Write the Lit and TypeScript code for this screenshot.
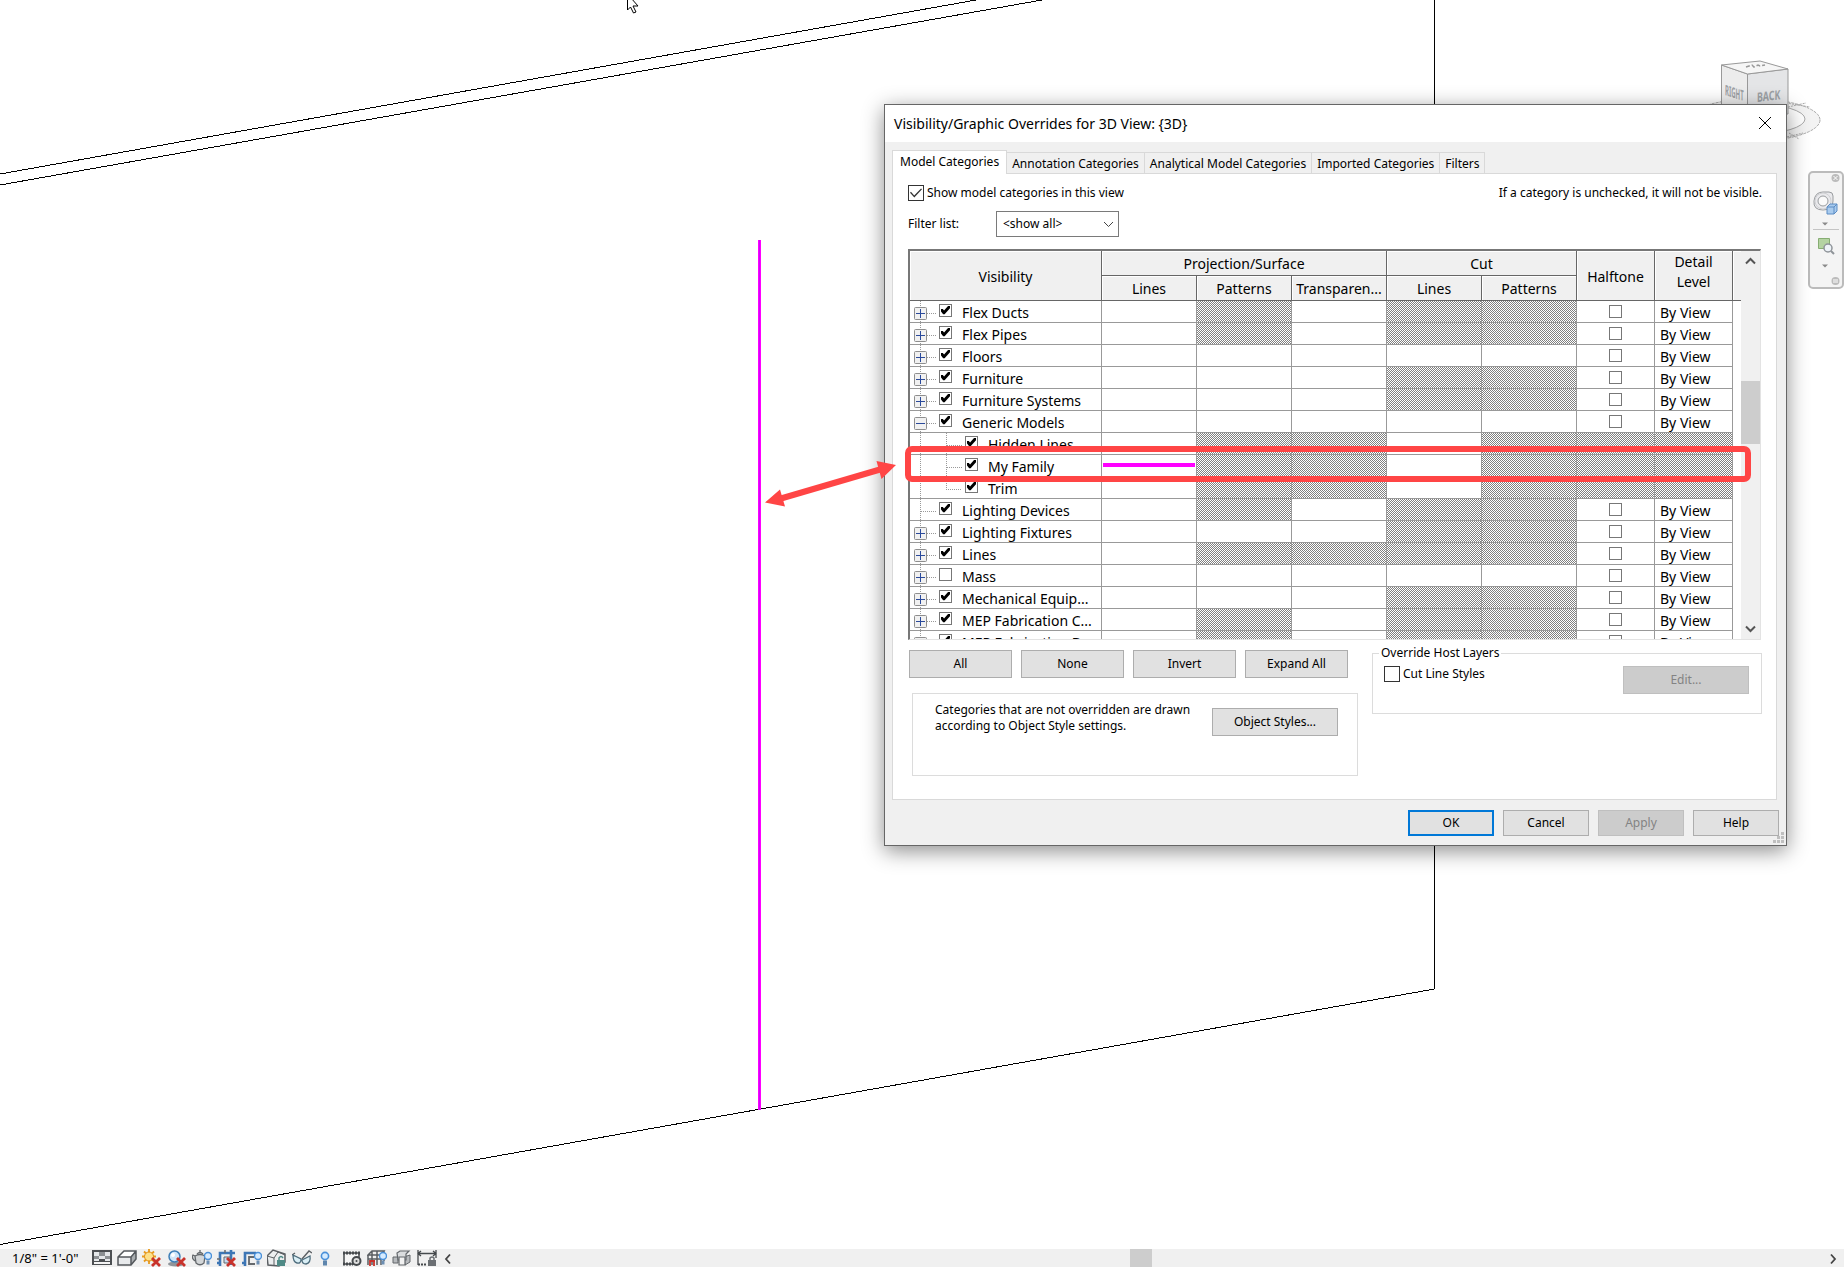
import { LitElement, css, html, svg, nothing, TemplateResult } from "lit";
import { customElement, state } from "lit/decorators.js";
import { classMap } from "lit/directives/class-map.js";

interface Category {
  name: string;
  /** Tree marker: "+" collapsed, "-" expanded, "" leaf, "child" / "last" subcategory. */
  node: "+" | "-" | "" | "child" | "last";
  on: boolean;
  /** Five flags for projection lines, patterns, transparency, cut lines, cut patterns; x = not available. */
  cells: string;
  line?: boolean;
}

const CATEGORIES: Category[] = [
  { name: "Flex Ducts", node: "+", on: true, cells: ".x.xx" },
  { name: "Flex Pipes", node: "+", on: true, cells: ".x.xx" },
  { name: "Floors", node: "+", on: true, cells: "....." },
  { name: "Furniture", node: "+", on: true, cells: "...xx" },
  { name: "Furniture Systems", node: "+", on: true, cells: "...xx" },
  { name: "Generic Models", node: "-", on: true, cells: "....." },
  { name: "Hidden Lines", node: "child", on: true, cells: ".xx.x" },
  { name: "My Family", node: "child", on: true, cells: ".xx.x", line: true },
  { name: "Trim", node: "last", on: true, cells: ".xx.x" },
  { name: "Lighting Devices", node: "", on: true, cells: ".x.xx" },
  { name: "Lighting Fixtures", node: "+", on: true, cells: "...xx" },
  { name: "Lines", node: "+", on: true, cells: ".xxxx" },
  { name: "Mass", node: "+", on: false, cells: "....." },
  { name: "Mechanical Equip...", node: "+", on: true, cells: "...xx" },
  { name: "MEP Fabrication C...", node: "+", on: true, cells: ".x.xx" },
  { name: "MEP Fabrication D...", node: "+", on: true, cells: ".x.xx" },
];

const TABS = [
  "Model Categories",
  "Annotation Categories",
  "Analytical Model Categories",
  "Imported Categories",
  "Filters",
];

const redX = svg`<path d="M10 9l8 8M18 9l-8 8" stroke="#c8322b" stroke-width="2.800" fill="none"/>`;
const smallBulb = svg`<circle cx="16" cy="7" r="3.500" fill="#d6ebff" stroke="#4a90d9" stroke-width="1.400"/><path d="M14.500 11.500h3v4h-3z" fill="#6d8fb3"/>`;

const VIEW_TOOLS: { label: string; art: TemplateResult }[] = [
  {
    label: "Detail Level",
    art: svg`<path d="M0 1h20v15H0z" fill="#4c4f52"/><path d="M2 3h5v4H2zM13 3h5v4h-5zM7 7h6v3H7zM2 10h5v2H2zM13 10h5v2h-5z" fill="#e4e7e9"/><path d="M7 3h6v4H7zM2 7h5v3H2zM13 7h5v3h-5z" fill="#8c9093"/><path d="M2 13h16v2H2z" fill="#f4f4f4"/>`,
  },
  {
    label: "Visual Style",
    art: svg`<path d="M1 8l6-6h12l-5 6z" fill="#fff"/><path d="M14 8l5-6v8l-5 6z" fill="#a9adb0"/><path d="M1 8h13v8H1z" fill="#e8eaec"/><path d="M1 8l6-6h12v8l-5 6H1zM1 8h13v8M14 8l5-6" fill="none" stroke="#54585c" stroke-width="1.500"/>`,
  },
  {
    label: "Sun Path",
    art: svg`<path d="M7 0v15M0 7.500h14M2 2.500l10 10M12 2.500l-10 10" stroke="#e79a1c" stroke-width="1.800"/><circle cx="7" cy="7.500" r="4.500" fill="#fde08a" stroke="#e08c10"/>${redX}`,
  },
  {
    label: "Shadows",
    art: svg`<ellipse cx="9" cy="15" rx="8" ry="2.500" fill="#8f9499"/><circle cx="7.500" cy="7.500" r="5.500" fill="#cfe6fa" stroke="#3f7fb8" stroke-width="1.500"/><circle cx="6" cy="6" r="2" fill="#fff"/>${redX}`,
  },
  {
    label: "Rendering Dialog",
    art: svg`<path d="M3 7q5-3 10 0l-1 7q-4 3.500-8 0zM3 12Q-1 9 1 6l2 1M5 5q3-3 6 0M8 3V1M13 8q4-3 6 0" fill="#d3d6d8" stroke="#63676b" stroke-width="1.300"/>${smallBulb}`,
  },
  {
    label: "Crop View",
    art: svg`<path d="M3 17V4h15M14 1v15M0 14h4" fill="none" stroke="#3d76b5" stroke-width="2.600"/><path d="M7 8h6v6H7z" fill="#c6dcf2" stroke="#65696d"/><path d="M0 10h3M8 1v3" stroke="#65696d" stroke-width="1.500"/>${redX}`,
  },
  {
    label: "Show Crop Region",
    art: svg`<path d="M3 17V4h11M0 14h4" fill="none" stroke="#3d76b5" stroke-width="2.600"/><path d="M7 16V8h5M7 15h6" fill="none" stroke="#65696d" stroke-width="1.800"/>${smallBulb}`,
  },
  {
    label: "Unlocked 3D View",
    art: svg`<path d="M0 7l6-6 12 4v8l-6 4-11-1z" fill="#eceeef" stroke="#5a5e62" stroke-width="1.500"/><path d="M0 7l7 2 4-6M7 9v7M11 3l7 3" fill="none" stroke="#5a5e62"/><path d="M10 11h8v6h-8z" fill="#4f8a86"/><path d="M12 11V9q2-3 4 0" fill="none" stroke="#4f8a86" stroke-width="1.500"/>`,
  },
  {
    label: "Temporary Hide/Isolate",
    art: svg`<path d="M0 6l3-2M10 10l7-8 3 2" fill="none" stroke="#5a5e62" stroke-width="1.400"/><path d="M1 6l8 4q0 5-4 4-4-1-4-8zM10 11l8-4q1 7-4 8-4 0-4-4z" fill="#d9eef5" stroke="#4d6c7c" stroke-width="1.300"/>`,
  },
  {
    label: "Reveal Hidden Elements",
    art: svg`<circle cx="8" cy="7" r="3.600" fill="#d6ebff" stroke="#4a90d9" stroke-width="1.600"/><path d="M6 11.500h4v5H6z" fill="#5f86ad"/>`,
  },
  {
    label: "Temporary View Properties",
    art: svg`<path d="M2 4h15v11H2z" fill="#f6f6f6" stroke="#45494c" stroke-width="1.500"/><path d="M1 4h17" stroke="#45494c" stroke-width="3" stroke-dasharray="2 1"/><path d="M1 15h10" stroke="#45494c" stroke-width="3" stroke-dasharray="2 1"/><circle cx="14.500" cy="12" r="4" fill="#ddd" stroke="#45494c" stroke-width="2"/><circle cx="14.500" cy="12" r="1" fill="#45494c"/>`,
  },
  {
    label: "Analytical Model",
    art: svg`<path d="M1 6l4-4h12l-3 4zM1 6v10M5 6v10M10 6v10M14 6v10M1 10h13M17 2v10M5 2v4M10 2v4" fill="none" stroke="#5a5e62" stroke-width="1.500"/><path d="M3 11v6M7 11v6M3 12h5" stroke="#c8322b" stroke-width="1.800"/>${smallBulb}`,
  },
  {
    label: "Highlight Displacement Sets",
    art: svg`<path d="M1 8h5v6H1zM12 8l6-2v7l-5 3z" fill="#b7babd" stroke="#63676b"/><path d="M5 4l3-2h9l-3 3v6H6z" fill="#dadcde" stroke="#63676b" stroke-width="1.200"/><path d="M7 8h6v8H7z" fill="#f2f2f2" stroke="#63676b" stroke-width="1.200"/>`,
  },
  {
    label: "Reveal Constraints",
    art: svg`<path d="M1 1v15M19 1v8M1 4.500h18M4 2L1 4.500 4 7M16 2l3 2.500L16 7" fill="none" stroke="#45494c" stroke-width="1.300"/><path d="M1 15.500h9" stroke="#45494c" stroke-width="2" stroke-dasharray="2 1"/><path d="M11 11h8v6h-8z" fill="#6b6f73"/><path d="M13 11V9q2-2 4 0v2" fill="none" stroke="#6b6f73" stroke-width="1.500"/>`,
  },
];

@customElement("app-root")
export class AppRoot extends LitElement {
  @state() private tab = 0;

  static styles = css`
    :host {
      display: block;
      --ui: "Noto Sans", "Open Sans", sans-serif;
      --rule: #999;
      --head-rule: #666;
      font: 12px/16px var(--ui);
      color: #000;
    }
    * {
      box-sizing: border-box;
    }
    button,
    input,
    select {
      font: inherit;
      color: inherit;
      margin: 0;
      padding: 0;
    }
    .workspace {
      position: relative;
      display: flex;
      flex-direction: column;
      min-height: 100vh;
      background: #fff;
      overflow: hidden;
    }
    .canvas {
      flex: 1;
    }
    .scene,
    .markup {
      position: absolute;
      inset: 0;
      width: 100%;
      height: 100%;
      pointer-events: none;
    }

    /* View control bar */
    .status {
      position: relative;
      display: flex;
      align-items: center;
      height: 18px;
      background: #f0f0f0;
      padding-left: 12px;
    }
    .scale {
      width: 80px;
      border: 0;
      background: none;
      text-align: left;
      font-size: 13px;
      line-height: 18px;
    }
    .tools {
      display: flex;
      gap: 5px;
    }
    .tool,
    .arrow {
      border: 0;
      background: none;
      display: block;
      height: 18px;
      width: 20px;
    }
    .tool svg,
    .arrow svg {
      display: block;
    }
    .hbar {
      flex: 1;
      display: flex;
      justify-content: space-between;
    }
    .thumb {
      width: 22px;
      background: #cdcdcd;
    }

    /* Navigation bar */
    .nav {
      position: absolute;
      top: 171px;
      right: 0;
      width: 36px;
      height: 118px;
      border: 2px solid #bbb;
      border-radius: 5px;
      background: #f4f4f4;
    }
    .nav svg {
      display: block;
    }

    /* Dialog */
    .dialog {
      position: absolute;
      left: 884px;
      top: 104px;
      width: 903px;
      border: 1px solid #666;
      background: #f0f0f0;
      box-shadow: 0 5px 20px rgba(0, 0, 0, 0.45);
    }
    .title {
      display: flex;
      align-items: center;
      justify-content: space-between;
      height: 37px;
      background: #fff;
      padding: 0 14px 0 9px;
    }
    .title h1 {
      margin: 0;
      font: 14px/20px var(--ui);
    }
    .close {
      width: 14px;
      height: 14px;
      border: 0;
      background: none;
    }
    .close svg {
      display: block;
    }
    .body {
      padding: 8px 9px 0 7px;
    }
    .tabs {
      display: flex;
      align-items: flex-end;
    }
    .tab {
      height: 21px;
      border: 1px solid #d9d9d9;
      border-left: 0;
      border-bottom: 0;
      background: #f0f0f0;
      padding: 1px 5px 0;
      white-space: nowrap;
    }
    .tab.active {
      height: 24px;
      margin-bottom: -1px;
      border-left: 1px solid #d9d9d9;
      background: #fff;
      padding: 0 7px 2px;
      position: relative;
    }
    .panel {
      border: 1px solid #d9d9d9;
      background: #fff;
      padding: 11px 14px 23px 15px;
    }
    .line {
      display: flex;
      align-items: center;
    }
    .top {
      justify-content: space-between;
    }
    .check {
      display: flex;
      align-items: center;
      gap: 3px;
    }
    .box {
      appearance: none;
      display: grid;
      place-items: center;
      width: 16px;
      height: 16px;
      border: 1px solid #333;
      background: #fff;
      flex: none;
    }
    .box:checked::before {
      content: "";
      width: 12px;
      height: 10px;
      background: #333;
      clip-path: polygon(0 48%, 8% 38%, 35% 76%, 92% 4%, 100% 12%, 36% 96%);
    }
    .filter {
      margin-top: 10px;
    }
    .filter label {
      width: 88px;
    }
    .pick {
      display: grid;
      align-items: center;
      width: 123px;
    }
    .pick > * {
      grid-area: 1 / 1;
    }
    .pick select {
      appearance: none;
      height: 26px;
      border: 1px solid #7a7a7a;
      border-radius: 0;
      background: #fff;
      padding: 0 6px;
    }
    .pick svg {
      justify-self: end;
      margin-right: 5px;
      pointer-events: none;
    }

    /* Category grid */
    .grid {
      display: flex;
      height: 391px;
      margin: 12px 1px 0 0;
      border: 1px solid #e3e3e3;
      border-top: 2px solid #777;
      border-left: 2px solid #777;
      font: 14px/20px var(--ui);
    }
    .rows {
      flex: 1;
      min-width: 0;
      overflow: hidden;
    }
    table {
      width: 100%;
      table-layout: fixed;
      border-collapse: separate;
      border-spacing: 0;
    }
    .c-val {
      width: 95px;
    }
    .c-end {
      width: 78px;
    }
    .c-pad {
      width: 8px;
    }
    th {
      height: 25px;
      padding: 2px 0 0;
      font-weight: 400;
      background: #f0f0f0;
      border-right: 1px solid var(--head-rule);
      border-bottom: 1px solid var(--head-rule);
      box-shadow: inset 1px 1px #fff;
      overflow: hidden;
      text-overflow: ellipsis;
      white-space: nowrap;
    }
    th.two {
      vertical-align: top;
      padding: 1px 0 0;
    }
    .pad {
      border-right: 0;
    }
    td {
      height: 22px;
      padding: 0;
      border-right: 1px solid var(--rule);
      border-bottom: 1px solid var(--rule);
    }
    td.pad {
      border: 0;
    }
    .off {
      background: repeating-conic-gradient(#808080 0 25%, #fff 0 50%) 0 0 / 2px 2px;
    }
    .name {
      display: flex;
      height: 21px;
      overflow: hidden;
    }
    .name svg {
      flex: none;
    }
    .name label {
      flex: 1;
      min-width: 0;
      margin-left: 10px;
      line-height: 24px;
      white-space: nowrap;
    }
    .mini {
      appearance: none;
      display: block;
      width: 13px;
      height: 13px;
      margin-top: 3px;
      border: 1px solid #777;
      background: #fff;
      flex: none;
    }
    .mini:checked::before {
      content: "";
      display: block;
      width: 9px;
      height: 9px;
      margin: 1px;
      background: #000;
      clip-path: polygon(0 34%, 20% 34%, 34% 50%, 78% 0, 100% 0, 100% 24%, 40% 92%, 24% 92%, 0 62%);
    }
    .half {
      padding-right: 1px;
    }
    .half .mini {
      margin: 0 auto 1px;
    }
    .stroke {
      height: 4px;
      margin: 0 1px 2px;
      background: #f0f;
    }
    .level {
      padding: 1px 0 0 5px;
    }
    .level span {
      display: block;
      height: 20px;
      line-height: 22px;
    }
    .vbar {
      width: 19px;
      display: flex;
      flex-direction: column;
      justify-content: space-between;
      background: #f0f0f0;
    }
    .vbar button {
      display: grid;
      place-items: center;
      width: 19px;
      height: 20px;
      border: 0;
      background: none;
    }
    .vbar span {
      height: 63px;
      margin-bottom: 66px;
      background: #cdcdcd;
    }

    /* Lower part of the page */
    .lower {
      display: flex;
      justify-content: space-between;
      align-items: flex-start;
      margin-top: 5px;
    }
    .left {
      width: 450px;
      padding-top: 5px;
    }
    .row {
      display: flex;
      gap: 9px;
      margin-left: 1px;
    }
    .btn {
      height: 28px;
      border: 1px solid #adadad;
      background: #e1e1e1;
    }
    .btn:disabled {
      border-color: #bfbfbf;
      background: #ccc;
      color: #838383;
    }
    .row .btn {
      width: 103px;
    }
    .wide {
      width: 126px;
    }
    .note {
      display: flex;
      justify-content: space-between;
      align-items: flex-start;
      height: 83px;
      margin: 15px 0 0 4px;
      border: 1px solid #dcdcdc;
      padding: 14px 19px 0 22px;
    }
    .note p {
      margin: -6px 0 0;
      white-space: nowrap;
    }
    fieldset {
      display: flex;
      justify-content: space-between;
      align-items: flex-start;
      width: 390px;
      height: 69px;
      margin: 0;
      border: 1px solid #dcdcdc;
      padding: 5px 12px 0 11px;
    }
    legend {
      margin-left: -5px;
      padding: 0 2px;
    }
    .footer {
      display: flex;
      justify-content: flex-end;
      gap: 9px;
      padding: 10px 7px 9px;
    }
    .footer .btn {
      width: 86px;
      height: 26px;
    }
    .footer .ok {
      border: 2px solid #0078d7;
    }
    .grip {
      position: absolute;
      right: 2px;
      bottom: 2px;
    }
  `;

  private renderTree(node: Category["node"]) {
    const child = node === "child" || node === "last";
    const dots = (d: string) =>
      svg`<path d=${d} stroke="#999" stroke-dasharray="1 1" fill="none" shape-rendering="crispEdges"/>`;
    return html`<svg width=${child ? 55 : 29} height="22" aria-hidden="true">
      ${dots("M10.5 0V22")}
      ${child ? dots(node === "last" ? "M36.5 0V12.5H52" : "M36.5 0V22M37 12.5H52") : dots("M11 12.5H26")}
      ${node === "+" || node === "-"
        ? svg`<rect x="4.500" y="6.500" width="12" height="12" rx="1" fill="#f1f1f1" stroke="#8e8e8e"/>
            <path d=${node === "+" ? "M6 12.5h9M10.5 8v9" : "M6 12.5h9"} stroke="#2b4a9b" fill="none"/>`
        : nothing}
    </svg>`;
  }

  private renderRow(c: Category, i: number) {
    const sub = c.node === "child" || c.node === "last";
    return html`<tr>
      <td>
        <div class="name">
          ${this.renderTree(c.node)}
          <input class="mini" type="checkbox" id="cat${i}" .checked=${c.on} />
          <label for="cat${i}">${c.name}</label>
        </div>
      </td>
      ${[...c.cells].map(
        (f, k) =>
          html`<td class=${classMap({ off: f === "x" })}>
            ${c.line && k === 0 ? html`<div class="stroke"></div>` : nothing}
          </td>`
      )}
      ${sub
        ? html`<td class="off"></td><td class="off"></td>`
        : html`<td class="half"><input class="mini" type="checkbox" aria-label="Halftone ${c.name}" /></td>
            <td class="level"><span>By View</span></td>`}
      <td class="pad"></td>
    </tr>`;
  }

  private renderScene() {
    return html`<svg class="scene" aria-hidden="true">
      <g stroke="#000" fill="none" shape-rendering="crispEdges">
        <path d="M0 174L976 0M0 185L1042 0M1434.500 0V989L0 1244.500" />
      </g>
      <path d="M759.500 240V1110" stroke="#f0f" stroke-width="3" />
      <path d="M759.500 240V1110" stroke="#d000ff" />
      <path d="M627.500 -6V10l3-3 3 6 2.500-1-3-6h5z" fill="#fff" stroke="#000" />
      <g stroke="#aaa" fill="none">
        <ellipse cx="1754" cy="120" rx="66" ry="21" fill="#f3f3f3" stroke-dasharray="3 1" />
        <ellipse cx="1754" cy="119" rx="51" ry="15" fill="#fff" />
        <path d="M1786 103l24 4M1788 107l18-4M1787 137l16-4M1789 133l10 6" stroke-dasharray="2 1" />
      </g>
      <g stroke="#999" stroke-width="1">
        <path d="M1721.500 65l26 9v40h-26z" fill="#ececec" />
        <path d="M1747.500 74l40.500-5v45h-40.500z" fill="#e4e5e7" />
        <path d="M1721.500 65l38.500-4 28 8-40.500 5z" fill="#f6f6f6" />
        <path d="M1746 67l6-2 2 2 4-2 2 1 5-1" fill="none" stroke-width="1.500" stroke-dasharray="4 2" />
      </g>
      <g fill="#9da1a5" font-family="Noto Sans" font-weight="700">
        <text font-size="12" transform="matrix(.5 .16 0 1.200 1725 95)">RIGHT</text>
        <text font-size="13" transform="matrix(.68 -.08 0 1 1757 102)">BACK</text>
      </g>
    </svg>`;
  }

  private renderNav() {
    return html`<nav class="nav" aria-label="Navigation">
      <svg width="32" height="114" aria-hidden="true">
        <circle cx="25.500" cy="5" r="4" fill="#bbb" />
        <path d="M23.500 3l4 4M27.500 3l-4 4" stroke="#fff" />
        <circle cx="25.500" cy="108" r="4" fill="#bbb" />
        <path d="M23 107h5M23 109h5" stroke="#fff" />
        <path d="M13 19h6q4 0 4 4v5q0 9-10 9t-9-9 9-9z" fill="#e9e9ec" stroke="#9a9da0" />
        <circle cx="13" cy="28" r="5" fill="#fafafa" stroke="#9a9da0" />
        <circle cx="13" cy="28" r="8" fill="none" stroke="#cfd0d3" />
        <path d="M17 34l3-3h7v7l-3 3h-7z" fill="#a9cbee" stroke="#5b8cc4" />
        <path d="M17 34h7v7M24 34l3-3" fill="none" stroke="#5b8cc4" />
        <path d="M12 49.500h6l-3 3zM12 91.500h6l-3 3z" fill="#8a8a8a" />
        <path d="M3 56.500h26" stroke="#c4c4c4" />
        <path d="M8.500 65.500h11v10h-11z" fill="#b4d3a2" stroke="#86ad72" />
        <circle cx="18" cy="75" r="4" fill="#eef3f8" stroke="#8f9499" stroke-width="1.500" />
        <path d="M21 78l3 3" stroke="#8f9499" stroke-width="2" />
      </svg>
    </nav>`;
  }

  private renderTable() {
    return html`<div class="grid">
      <div class="rows">
        <table>
          <colgroup>
            <col />
            ${[1, 2, 3, 4, 5].map(() => html`<col class="c-val" />`)}
            <col class="c-end" /><col class="c-end" /><col class="c-pad" />
          </colgroup>
          <thead>
            <tr>
              <th rowspan="2">Visibility</th>
              <th colspan="3">Projection/Surface</th>
              <th colspan="2">Cut</th>
              <th rowspan="2">Halftone</th>
              <th rowspan="2" class="two">Detail<br />Level</th>
              <th rowspan="2" class="pad"></th>
            </tr>
            <tr>
              <th>Lines</th>
              <th>Patterns</th>
              <th>Transparen...</th>
              <th>Lines</th>
              <th>Patterns</th>
            </tr>
          </thead>
          <tbody>
            ${CATEGORIES.map((c, i) => this.renderRow(c, i))}
          </tbody>
        </table>
      </div>
      <div class="vbar">
        <button aria-label="Scroll up">
          <svg width="11" height="8"><path d="M1 6.500l4.500-4.500L10 6.500" fill="none" stroke="#555" stroke-width="2" /></svg>
        </button>
        <span></span>
        <button aria-label="Scroll down">
          <svg width="11" height="8"><path d="M1 1.500L5.500 6 10 1.500" fill="none" stroke="#555" stroke-width="2" /></svg>
        </button>
      </div>
    </div>`;
  }

  private renderDialog() {
    return html`<section class="dialog" role="dialog" aria-labelledby="title">
      <header class="title">
        <h1 id="title">Visibility/Graphic Overrides for 3D View: {3D}</h1>
        <button class="close" aria-label="Close">
          <svg width="14" height="14"><path d="M1 0l12 12M13 0L1 12" stroke="#000" fill="none" /></svg>
        </button>
      </header>
      <div class="body">
        <div class="tabs" role="tablist">
          ${TABS.map(
            (t, i) =>
              html`<button
                class=${classMap({ tab: true, active: i === this.tab })}
                role="tab"
                aria-selected=${i === this.tab}
                @click=${() => (this.tab = i)}
              >
                ${t}
              </button>`
          )}
        </div>
        <div class="panel">
          <div class="line top">
            <label class="check"><input class="box" type="checkbox" checked />Show model categories in this view</label>
            <span>If a category is unchecked, it will not be visible.</span>
          </div>
          <div class="line filter">
            <label for="filter">Filter list:</label>
            <div class="pick">
              <select id="filter">
                <option>&lt;show all&gt;</option>
              </select>
              <svg width="11" height="7"><path d="M1 1l4.500 4.500L10 1" fill="none" stroke="#444" /></svg>
            </div>
          </div>
          ${this.renderTable()}
          <div class="lower">
            <div class="left">
              <div class="row">
                ${["All", "None", "Invert", "Expand All"].map((b) => html`<button class="btn">${b}</button>`)}
              </div>
              <div class="note">
                <p>Categories that are not overridden are drawn<br />according to Object Style settings.</p>
                <button class="btn wide">Object Styles...</button>
              </div>
            </div>
            <fieldset>
              <legend>Override Host Layers</legend>
              <label class="check"><input class="box" type="checkbox" />Cut Line Styles</label>
              <button class="btn wide" disabled>Edit...</button>
            </fieldset>
          </div>
        </div>
      </div>
      <footer class="footer">
        <button class="btn ok">OK</button>
        <button class="btn">Cancel</button>
        <button class="btn" disabled>Apply</button>
        <button class="btn">Help</button>
      </footer>
      <svg class="grip" width="11" height="11" aria-hidden="true">
        <path d="M8 0h3v3H8zM8 4h3v3H8zM4 4h3v3H4zM0 8h3v3H0zM4 8h3v3H4zM8 8h3v3H8z" fill="#bfbfbf" />
      </svg>
    </section>`;
  }

  render() {
    return html`<main class="workspace">
      ${this.renderScene()}
      <div class="canvas"></div>
      ${this.renderNav()}
      <div class="status">
        <button class="scale">1/8" = 1'-0"</button>
        <div class="tools">
          ${VIEW_TOOLS.map(
            (t) =>
              html`<button class="tool" aria-label=${t.label}><svg width="20" height="18">${t.art}</svg></button>`
          )}
        </div>
        <div class="hbar">
          <button class="arrow" aria-label="Scroll left">
            <svg width="20" height="18"><path d="M13 5.500L9 10l4 4.500" fill="none" stroke="#444" stroke-width="1.800" /></svg>
          </button>
          <span class="thumb"></span>
          <button class="arrow" aria-label="Scroll right">
            <svg width="20" height="18"><path d="M7 5.500l4 4.500-4 4.500" fill="none" stroke="#444" stroke-width="1.800" /></svg>
          </button>
        </div>
      </div>
      ${this.renderDialog()}
      <svg class="markup" aria-hidden="true">
        <rect x="908" y="449" width="840" height="30" rx="4" fill="none" stroke="#ff4545" stroke-width="6" />
        <path d="M781 498.500L880 469.500" stroke="#ff4545" stroke-width="6" />
        <path d="M765 502.500l15-13 5 17zM896 465l-19.500-4 5 18z" fill="#ff4545" />
      </svg>
    </main>`;
  }
}
